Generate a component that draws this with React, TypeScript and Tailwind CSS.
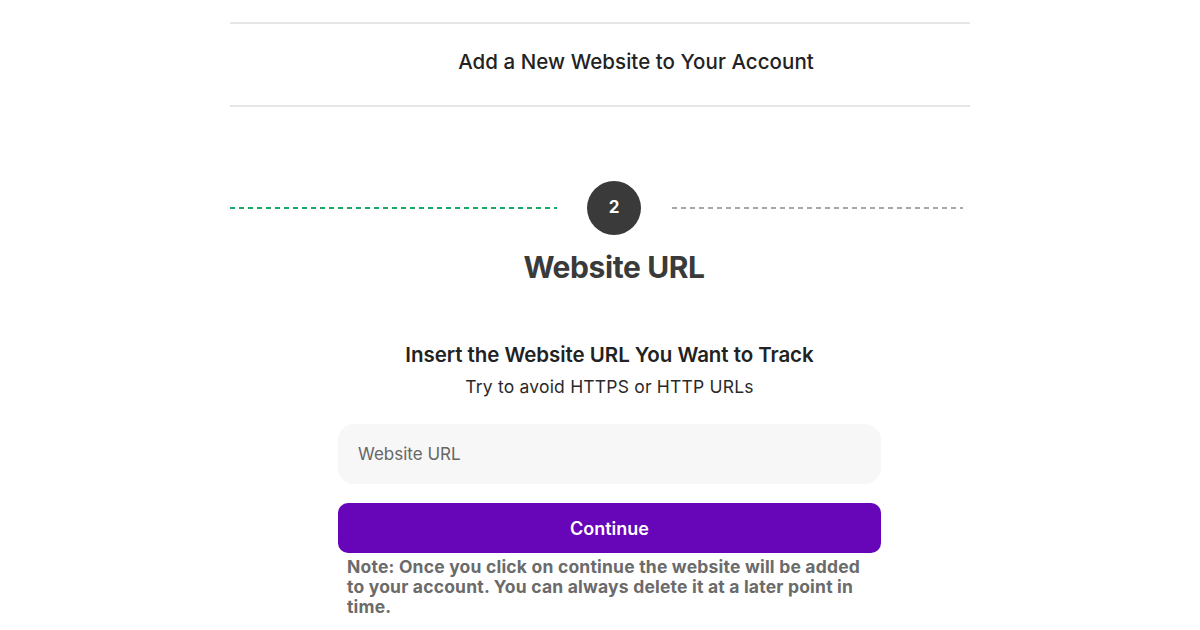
import React from 'react'

function DashedLine({ color, width }: { color: string; width: number }) {
  return (
    <svg width={width} height="2" className="block">
      <line x1="0" y1="1" x2={width} y2="1" stroke={color} strokeWidth="2" strokeDasharray="5 4" />
    </svg>
  )
}

export default function App() {
  return (
    <div className="min-h-screen w-full bg-white font-['Inter',sans-serif]">
      <div className="mx-auto w-[740px] pt-[22px]">
        {/* Header */}
        <div className="flex h-[85px] items-center justify-center border-y-2 border-[#e6e6e6] pb-[4px] pl-[72px]">
          <h1 className="text-[20.5px] font-medium tracking-[0.05px] text-[#222]">
            Add a New Website to Your Account
          </h1>
        </div>

        {/* Stepper */}
        <div className="mt-[74px] flex items-center">
          <DashedLine color="#1aa86a" width={327} />
          <div className="ml-[30px] flex h-[54px] w-[54px] items-center justify-center rounded-full bg-[#3a3a3a] text-[17px] font-bold text-white">
            2
          </div>
          <div className="ml-[31px]">
            <DashedLine color="#a8a8a8" width={291} />
          </div>
        </div>
        <h2 className="mt-[10px] w-[768px] text-center text-[30px] font-bold tracking-[-0.4px] text-[#3a3a3a]">
          Website URL
        </h2>

        {/* Form */}
        <div className="ml-[108px] mt-[50px] flex w-[543px] flex-col">
          <h3 className="text-center text-[20.5px] font-semibold tracking-[-0.05px] text-[#222]">
            Insert the Website URL You Want to Track
          </h3>
          <p className="mt-[3px] text-center text-[17.5px] tracking-[0.2px] text-[#2a2a2a]">
            Try to avoid HTTPS or HTTP URLs
          </p>
          <input
            type="text"
            placeholder="Website URL"
            className="mt-[24px] h-[60px] w-full rounded-[16px] bg-[#f7f7f7] px-[20px] text-[17px] text-[#333] outline-none placeholder:text-[#666]"
          />
          <button className="mt-[19px] h-[50px] w-full rounded-[10px] bg-[#6606b8] text-[18px] font-semibold text-white">
            Continue
          </button>
          <p className="mt-[4px] px-[9px] text-[17.5px] font-bold leading-[20px] tracking-[0.2px] text-[#6b6b6b]">
            Note: Once you click on continue the website will be added to your account. You can always delete it at a later point in time.
          </p>
        </div>
      </div>
    </div>
  )
}
